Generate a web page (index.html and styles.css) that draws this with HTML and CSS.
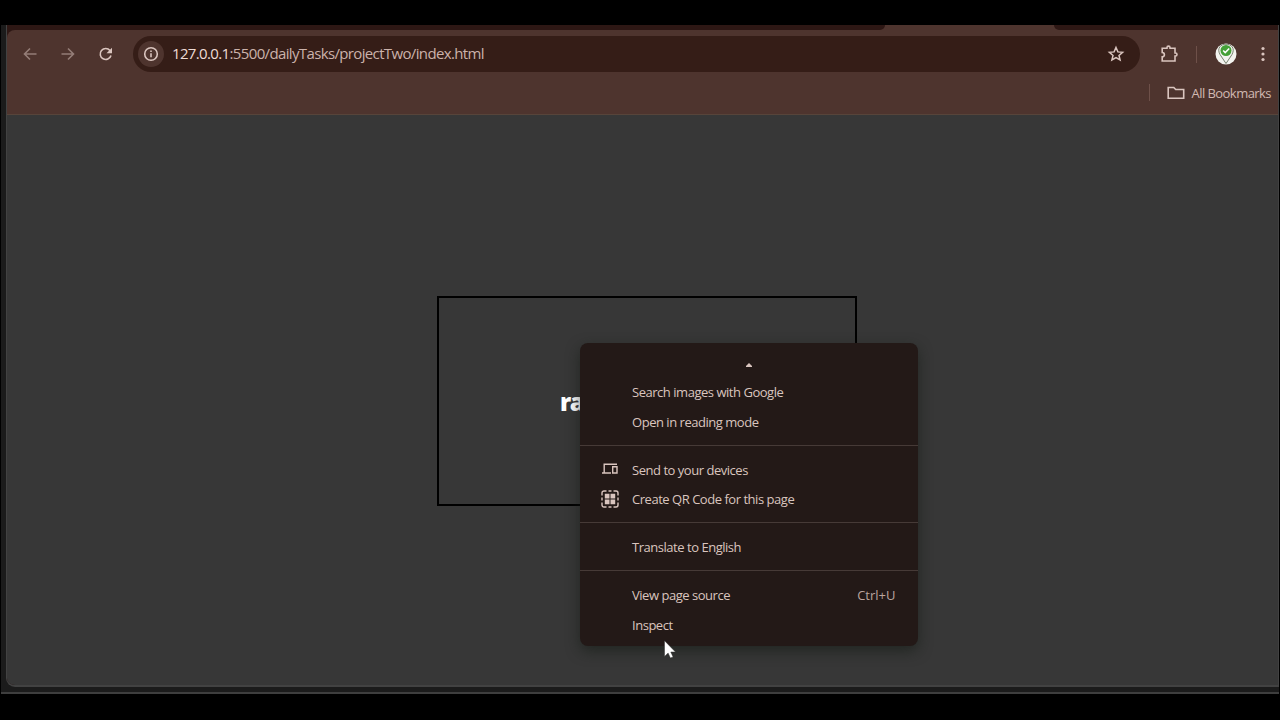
FILE: index.html
```html
<!DOCTYPE html>
<html lang="en">
<head>
    <meta charset="UTF-8">
    <meta name="viewport" content="width=device-width, initial-scale=1.0">
    <title>index.html</title>
    <link rel="stylesheet" href="styles.css">
</head>
<body>
    <div class="window">
        <div class="browser">
            <div class="tab-strip">
                <div class="tabs-left"></div>
                <div class="tabs-right"></div>
            </div>
            <div class="toolbar">
                <div class="nav">
                    <svg class="dim" width="16" height="16" viewBox="0 0 16 16"><path d="M14.500 8H3M8 2.500L2.500 8L8 13.500"/></svg>
                    <svg class="dim" width="16" height="16" viewBox="0 0 16 16"><path d="M1.500 8H13M8 2.500L13.500 8L8 13.500"/></svg>
                    <svg width="16" height="16" viewBox="0 0 16 16"><path d="M13 9.500A5.500 5.500 0 1 1 12 4.500L13 6"/><path class="solid" d="M14 1.700V7.200H8.500z"/></svg>
                </div>
                <div class="omnibox">
                    <div class="site-info">
                        <svg width="16" height="16" viewBox="0 0 16 16"><circle cx="8" cy="8" r="6.300"/><path d="M8 7.200v4M8 4.500v1.500"/></svg>
                    </div>
                    <span class="url"><b>127.0.0.1</b>:5500/dailyTasks/projectTwo/index.html</span>
                    <svg class="star" width="18" height="18" viewBox="0 0 18 18"><path d="M9 2.500l1.900 4.400 4.700.4-3.600 3.100 1.100 4.600L9 12.600l-4.100 2.400L6 10.400 2.400 7.300l4.700-.4z"/></svg>
                </div>
                <svg class="extensions" width="20" height="20" viewBox="0 0 20 20"><path d="M3.200 4.200h4.800v-.6a1.500 1.500 0 0 1 3 0v.6h5v4.800h.5a1.500 1.500 0 0 1 0 3H16v5H3.200v-4.200c1.400-.1 2.200-.9 2.200-2.100s-.8-2.100-2.200-2.200z"/></svg>
                <div class="divider"></div>
                <svg class="avatar" width="22" height="22" viewBox="0 0 22 22">
                    <circle class="face" cx="11" cy="11" r="10.500"/>
                    <path class="pin" d="M11 20.500L5 11.500C1.500 5 6 1.200 11 1.200S20.500 5 17 11.500z"/>
                    <circle class="badge" cx="11" cy="7.500" r="5.500"/>
                    <path class="check" d="M8.200 7.500l2 2 4-4"/>
                </svg>
                <svg class="kebab" width="6" height="18" viewBox="0 0 6 18"><circle cx="3" cy="3.500" r="1.600"/><circle cx="3" cy="9" r="1.600"/><circle cx="3" cy="14.500" r="1.600"/></svg>
            </div>
            <div class="bookmarks">
                <div class="divider"></div>
                <svg width="18" height="14" viewBox="0 0 18 14"><path d="M1.200 12.300V1.500h5.600l1.900 2h8v8.800z"/></svg>
                <span>All Bookmarks</span>
            </div>
            <div class="page">
                <div class="box"><h1>ra</h1></div>
            </div>
        </div>
    </div>

    <div class="menu">
        <div class="menu-scroll"><svg width="6" height="4" viewBox="0 0 6 4"><path d="M0 4V3L3 0l3 3v1z"/></svg></div>
        <div class="item"><i></i><span>Search images with Google</span></div>
        <div class="item"><i></i><span>Open in reading mode</span></div>
        <hr>
        <div class="item">
            <svg width="18" height="18" viewBox="0 0 18 18"><path d="M3.200 11.500V3.200H16M1 12h9M11.700 5.700h4.300v6.300h-4.300z"/></svg>
            <span>Send to your devices</span>
        </div>
        <div class="item">
            <svg width="18" height="18" viewBox="0 0 18 18"><path d="M1 5.500V3a2 2 0 0 1 2-2h2.500M12.500 1H15a2 2 0 0 1 2 2v2.500M17 12.500V15a2 2 0 0 1-2 2h-2.500M5.500 17H3a2 2 0 0 1-2-2v-2.500M7.500 1h3M7.500 17h3M1 7.500v3M17 7.500v3"/><path class="solid" d="M3.800 3.800h4.700v4.700H3.800zM9.500 3.800h4.700v4.700H9.500zM3.800 9.500h4.700v4.700H3.800zM9.500 9.500h4.700v4.700H9.500z"/></svg>
            <span>Create QR Code for this page</span>
        </div>
        <hr>
        <div class="item"><i></i><span>Translate to English</span></div>
        <hr>
        <div class="item"><i></i><span>View page source</span><kbd>Ctrl+U</kbd></div>
        <div class="item"><i></i><span>Inspect</span></div>
    </div>

    <svg class="cursor" width="12" height="19" viewBox="0 0 12 19"><path d="M.5.700v15.800l3.600-3.400 2.300 5 2.700-1.200-2.300-4.900h4.700z"/></svg>
</body>
</html>
```
FILE: styles.css
```css
:root {
    --toolbar: #4e342e;
    --tabs: #2d1714;
    --omnibox: #351d17;
    --page: #373737;
    --menu: #231917;
    --text: #dac5bf;
}

* {
    margin: 0;
    padding: 0;
    box-sizing: border-box;
}

body {
    height: 720px;
    padding: 25px 1px 0;
    overflow: hidden;
    background: #000;
    color: var(--text);
    font-family: "Open Sans", "Noto Sans", sans-serif;
}

svg {
    display: block;
    flex: none;
    fill: none;
    stroke: var(--text);
    stroke-width: 1.6;
}

svg .solid {
    fill: var(--text);
    stroke: none;
}

.window {
    height: 669px;
    padding: 0 0 7px 5px;
    background: #1b1b1b;
    border-bottom: 2px solid #3e3e3e;
}

.browser {
    display: flex;
    flex-direction: column;
    height: 662px;
    border: 1px solid #424242;
    border-width: 0 1px 2px;
    border-radius: 0 0 0 9px;
    overflow: hidden;
    background: var(--tabs);
}

.tab-strip {
    display: flex;
    justify-content: space-between;
    flex: none;
    height: 5px;
    background: var(--toolbar);
}

.tabs-left {
    width: 878px;
    background: var(--tabs);
    border-bottom-right-radius: 5px;
}

.tabs-right {
    width: 224px;
    background: var(--tabs);
    border-bottom-left-radius: 5px;
}

.toolbar {
    display: flex;
    align-items: center;
    flex: none;
    height: 48px;
    padding: 0 12px 0 15px;
    background: var(--toolbar);
    border-top-left-radius: 8px;
}

.nav {
    display: flex;
    gap: 22px;
    width: 111px;
}

.nav .dim {
    opacity: 0.5;
}

.omnibox {
    display: flex;
    align-items: center;
    width: 1007px;
    height: 36px;
    padding: 0 15px 0 5px;
    border-radius: 18px;
    background: var(--omnibox);
}

.site-info {
    display: flex;
    align-items: center;
    justify-content: center;
    width: 26px;
    height: 26px;
    margin-right: 8px;
    border-radius: 50%;
    background: var(--toolbar);
}

.url {
    flex: 1;
    padding-bottom: 2px;
    font-size: 15px;
    letter-spacing: -0.64px;
    color: #cbb2ab;
    white-space: nowrap;
}

.url b {
    font-weight: 400;
    color: #eedbd5;
}

.star {
    stroke-width: 1.5;
}

.extensions {
    margin-left: 19px;
}

.divider {
    width: 1px;
    height: 17px;
    background: #6e5049;
}

.toolbar .divider {
    margin: 0 18px 0 17px;
}

.avatar .face {
    fill: #f3f3ef;
    stroke: none;
}

.avatar .pin {
    stroke: #77826f;
    stroke-width: 1;
}

.avatar .badge {
    fill: #44a037;
    stroke: none;
}

.avatar .check {
    stroke: #fff;
}

.kebab {
    margin-left: auto;
    fill: var(--text);
    stroke: none;
}

.bookmarks {
    display: flex;
    align-items: center;
    justify-content: flex-end;
    flex: none;
    height: 37px;
    padding: 0 7px 7px 0;
    background: var(--toolbar);
    border-bottom: 1px solid #57443a;
    font-size: 13px;
    letter-spacing: -0.55px;
    color: #d1b9b2;
}

.bookmarks svg {
    margin: 0 7px 0 17px;
}

.page {
    flex: 1;
    padding: 181px 0 0 430px;
    background: var(--page);
}

.box {
    display: flex;
    align-items: center;
    width: 420px;
    height: 210px;
    padding-left: 121px;
    border: 2px solid #000;
}

h1 {
    font-size: 24px;
    font-weight: 800;
    letter-spacing: -1.5px;
    color: #fff;
}

.menu {
    position: absolute;
    left: 580px;
    top: 343px;
    width: 337.5px;
    height: 303px;
    border-radius: 8px;
    background: var(--menu);
    box-shadow: 0 5px 14px rgba(20, 26, 20, 0.6);
    font-size: 13px;
    letter-spacing: -0.47px;
}

.menu-scroll {
    display: flex;
    align-items: center;
    justify-content: center;
    height: 34.5px;
    padding-top: 9px;
}

.menu-scroll path {
    fill: var(--text);
    stroke: none;
}

.item {
    display: flex;
    align-items: center;
    height: 29.6px;
    padding: 0 22px 0 21px;
    white-space: nowrap;
}

.item i,
.item svg {
    width: 18px;
    margin-right: 13px;
}

.item svg {
    stroke-width: 1.4;
}

.item kbd {
    margin-left: auto;
    font-family: inherit;
    letter-spacing: 0;
    color: #b9a49e;
}

hr {
    height: 1px;
    margin: 8.3px 0 9px;
    border: 0;
    background: #463a37;
}

.cursor {
    position: absolute;
    left: 664px;
    top: 640px;
    fill: #fff;
    stroke: #333;
    stroke-width: 0.5;
}
```
